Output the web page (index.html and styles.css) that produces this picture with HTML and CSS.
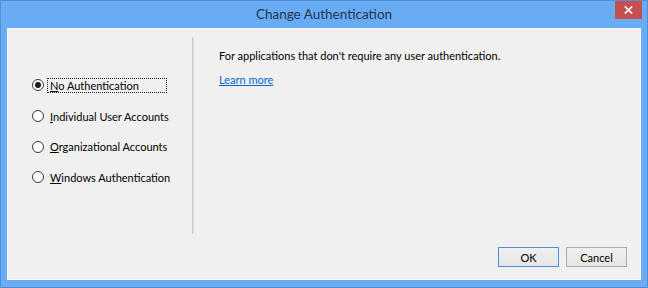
FILE: index.html
```html
<!DOCTYPE html>
<html>
<head>
<meta charset="utf-8">
<link rel="stylesheet" href="styles.css">
</head>
<body>
<div class="window">
  <div class="titlebar">
    <span class="title">Change Authentication</span>
    <button class="close" aria-label="Close">
      <svg width="9" height="8" viewBox="0 0 9 8"><path d="M0.8 0.5 L8.2 7.5 M8.2 0.5 L0.8 7.5" stroke="#fff" stroke-width="1.7" fill="none"/></svg>
    </button>
  </div>
  <div class="client">
    <div class="main">
      <div class="left">
        <div class="option"><span class="radio checked"></span><span class="label focused"><u>N</u>o Authentication</span></div>
        <div class="option"><span class="radio"></span><span class="label"><u>I</u>ndividual User Accounts</span></div>
        <div class="option"><span class="radio"></span><span class="label"><u>O</u>rganizational Accounts</span></div>
        <div class="option"><span class="radio"></span><span class="label"><u>W</u>indows Authentication</span></div>
      </div>
      <div class="divider"></div>
      <div class="right">
        <p class="desc">For applications that don't require any user authentication.</p>
        <a class="link" href="#">Learn more</a>
      </div>
    </div>
    <div class="footer">
      <button class="btn default">OK</button>
      <button class="btn">Cancel</button>
    </div>
  </div>
</div>
</body>
</html>
```
FILE: styles.css
```css
html, body {
  margin: 0;
  padding: 0;
}
body {
  width: 648px;
  height: 288px;
  overflow: hidden;
  font-family: Lato, "Noto Sans", sans-serif;
  font-size: 11px;
  color: #000;
}
.window {
  box-sizing: border-box;
  width: 648px;
  height: 288px;
  border: 1px solid #4f8edb;
  background: #6aacf3;
  padding: 0 6px 7px 6px;
  display: flex;
  flex-direction: column;
  position: relative;
}
.titlebar {
  height: 27px;
  flex: none;
  display: flex;
  align-items: center;
  justify-content: center;
}
.title {
  font-size: 13.5px;
  color: #1c3553;
  margin-top: -1px;
  white-space: nowrap;
}
.close {
  position: absolute;
  top: 0;
  right: 5px;
  width: 27px;
  height: 18px;
  border: none;
  padding: 0;
  background: #c74f4f;
  display: flex;
  align-items: center;
  justify-content: center;
}
.client {
  flex: 1;
  background: #f0f0f0;
  border: 1px solid #f7f9fb;
  display: flex;
  flex-direction: column;
}
.main {
  flex: 1;
  display: flex;
}
.left {
  width: 184px;
  flex: none;
  padding: 41px 0 0 24px;
  box-sizing: border-box;
}
.option {
  height: 30.7px;
  display: flex;
  align-items: center;
  white-space: nowrap;
}
.radio {
  box-sizing: border-box;
  width: 12px;
  height: 12px;
  border: 1px solid #3a3a3a;
  border-radius: 50%;
  background: #fff;
  display: flex;
  align-items: center;
  justify-content: center;
  flex: none;
}
.radio.checked::after {
  content: "";
  width: 6px;
  height: 6px;
  border-radius: 50%;
  background: #1a1a1a;
}
.label {
  margin-left: 3px;
  padding: 0 2px;
  border: 1px solid transparent;
  line-height: 13px;
}
.label.focused {
  border: 1px dotted #222;
  width: 114px;
}
.divider {
  width: 1px;
  height: 197px;
  margin-top: 8px;
  background: #c9c9c9;
  border-right: 1px solid #e2e2e2;
  flex: none;
}
.right {
  padding: 19px 0 0 25px;
  white-space: nowrap;
}
.desc {
  margin: 0;
  line-height: 16px;
}
.link {
  display: block;
  margin-top: 8px;
  line-height: 16px;
  color: #0066cc;
  text-decoration: underline;
}
.footer {
  flex: none;
  display: flex;
  justify-content: flex-end;
  gap: 7px;
  padding: 0 13px 12px 0;
}
.btn {
  box-sizing: border-box;
  width: 61px;
  height: 20px;
  padding: 0;
  font-family: inherit;
  font-size: 11px;
  color: #000;
  background: linear-gradient(#f0f0f0, #e5e5e5);
  border: 1px solid #acacac;
}
.btn.default {
  border-color: #4a8fd8;
}
```
